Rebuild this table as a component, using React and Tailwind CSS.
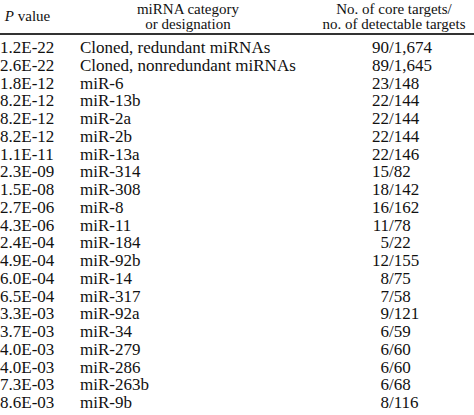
import React from "react";

const rows = [
  ["1.2E-22", "Cloned, redundant miRNAs", "90", "1,674"],
  ["2.6E-22", "Cloned, nonredundant miRNAs", "89", "1,645"],
  ["1.8E-12", "miR-6", "23", "148"],
  ["8.2E-12", "miR-13b", "22", "144"],
  ["8.2E-12", "miR-2a", "22", "144"],
  ["8.2E-12", "miR-2b", "22", "144"],
  ["1.1E-11", "miR-13a", "22", "146"],
  ["2.3E-09", "miR-314", "15", "82"],
  ["1.5E-08", "miR-308", "18", "142"],
  ["2.7E-06", "miR-8", "16", "162"],
  ["4.3E-06", "miR-11", "11", "78"],
  ["2.4E-04", "miR-184", "5", "22"],
  ["4.9E-04", "miR-92b", "12", "155"],
  ["6.0E-04", "miR-14", "8", "75"],
  ["6.5E-04", "miR-317", "7", "58"],
  ["3.3E-03", "miR-92a", "9", "121"],
  ["3.7E-03", "miR-34", "6", "59"],
  ["4.0E-03", "miR-279", "6", "60"],
  ["4.0E-03", "miR-286", "6", "60"],
  ["7.3E-03", "miR-263b", "6", "68"],
  ["8.6E-03", "miR-9b", "8", "116"],
];

export default function App() {
  return (
    <div className="w-[474px] h-[415px] overflow-hidden bg-white text-[#111] font-['Liberation_Serif',serif]">
      <div className="flex items-center h-[33px] text-[15px] leading-[15px] whitespace-nowrap">
        <div className="w-[55px] text-center">
          <i>P</i> value
        </div>
        <div className="w-[266px] text-center">
          <div>miRNA category</div>
          <div>or designation</div>
        </div>
        <div className="w-[146px] flex flex-col items-center">
          <div>No. of core targets/</div>
          <div>no. of detectable targets</div>
        </div>
      </div>
      <div className="h-[2px] bg-[#333]" />
      <div className="pt-[4px] text-[17px] leading-[17.75px]">
        {rows.map((r, i) => (
          <div key={i} className="flex whitespace-nowrap">
            <div className="w-[80px]">{r[0]}</div>
            <div className="w-[260px]">{r[1]}</div>
            <div className="w-[49px] text-right">{r[2]}</div>
            <div>/{r[3]}</div>
          </div>
        ))}
      </div>
    </div>
  );
}
